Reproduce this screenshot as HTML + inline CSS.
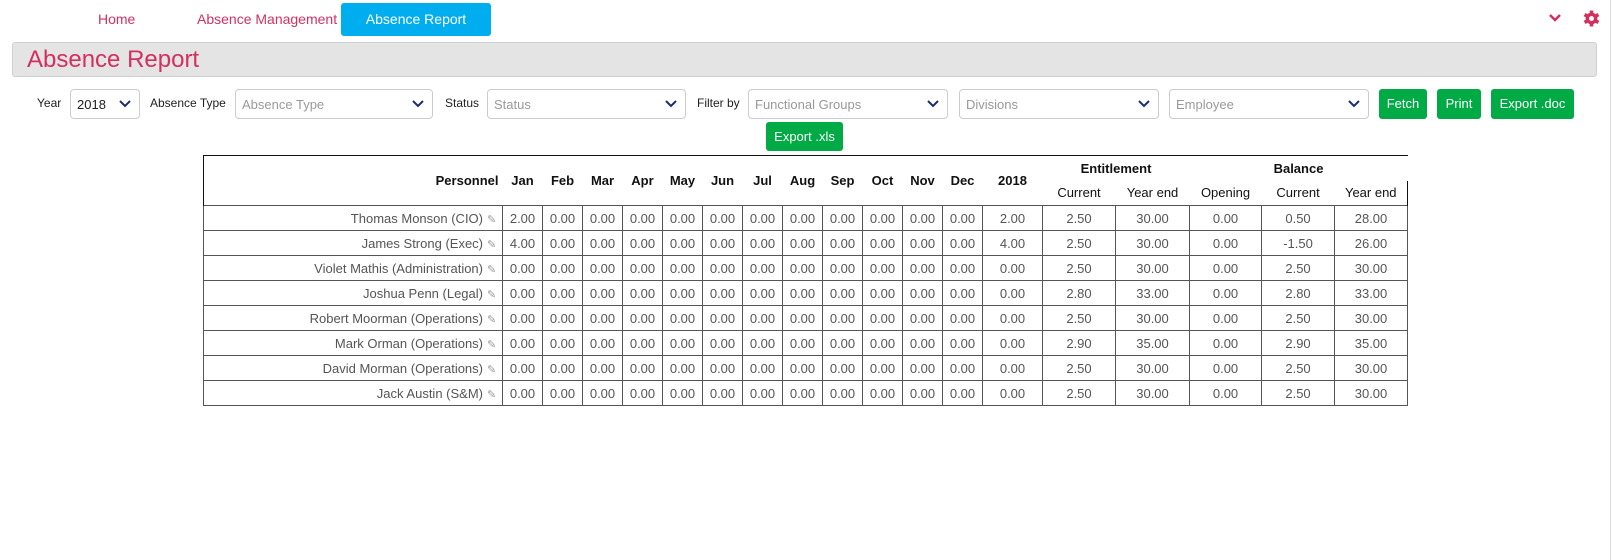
<!DOCTYPE html>
<html><head><meta charset="utf-8"><style>
*{box-sizing:border-box;margin:0;padding:0}
body{width:1613px;height:560px;background:#fff;font-family:"Liberation Sans",sans-serif;position:relative;overflow:hidden;font-size:13px}
.a{position:absolute}
.nav{color:#d3305f;font-size:14px;top:11px}
.tab{left:341px;top:3px;width:150px;height:33px;background:#00aeef;color:#fff;border-radius:3px;font-size:14px;text-align:center;line-height:33px}
.bar{left:12px;top:42px;width:1585px;height:35px;background:#e4e4e4;border:1px solid #d0d0d0;border-radius:3px}
.bar span{position:absolute;left:14px;top:3px;font-size:24px;color:#d3305f}
.lbl{top:96px;font-size:12px;color:#222}
.sel{top:89px;height:30px;border:1px solid #ccc;border-radius:4px;color:#999;font-size:13px;padding:7px 0 0 6px}
.sel svg{position:absolute;right:8px;top:10px}
.btn{top:89px;height:30px;background:#00aa44;color:#fff;border-radius:3px;font-size:13px;text-align:center;line-height:30px}
table{position:absolute;left:203px;top:155px;border-collapse:collapse;table-layout:fixed;width:1204px}
td{border:1px solid #555;height:25px;text-align:center;color:#555;font-size:13px;padding:0}
td.n{text-align:right;padding-right:6px}
th{font-size:13px;color:#111;padding:0}
.pen{display:inline-block;width:9px;color:#999;font-size:11px;margin-left:4px}
</style></head><body>
<div class="a nav" style="left:98px">Home</div>
<div class="a nav" style="left:197px">Absence Management</div>
<div class="a tab">Absence Report</div>
<svg class="a" style="left:1548px;top:13px" width="14" height="10" viewBox="0 0 14 10"><path d="M2 2l5 5 5-5" stroke="#d3305f" stroke-width="2.5" fill="none"/></svg>
<svg class="a" style="left:1583px;top:10px" width="17" height="17" viewBox="0 0 16 16"><g fill="#d3305f"><circle cx="8" cy="8" r="5.5"/><rect x="6.3" y="0.5" width="3.4" height="15"/><rect x="6.3" y="0.5" width="3.4" height="15" transform="rotate(60 8 8)"/><rect x="6.3" y="0.5" width="3.4" height="15" transform="rotate(120 8 8)"/></g><circle cx="8" cy="8" r="2.3" fill="#fff"/></svg>
<div class="a" style="left:1610px;top:0;width:1px;height:560px;background:#ddd"></div>
<div class="a bar"><span>Absence Report</span></div>

<div class="a lbl" style="left:37px">Year</div>
<div class="a sel" style="left:70px;width:70px;color:#222">2018<svg width="12" height="8"><path d="M1 1l5 5 5-5" stroke="#1a2e6e" stroke-width="2" fill="none"/></svg></div>
<div class="a lbl" style="left:150px">Absence Type</div>
<div class="a sel" style="left:235px;width:198px">Absence Type<svg width="12" height="8"><path d="M1 1l5 5 5-5" stroke="#1a2e6e" stroke-width="2" fill="none"/></svg></div>
<div class="a lbl" style="left:445px">Status</div>
<div class="a sel" style="left:487px;width:199px">Status<svg width="12" height="8"><path d="M1 1l5 5 5-5" stroke="#1a2e6e" stroke-width="2" fill="none"/></svg></div>
<div class="a lbl" style="left:697px">Filter by</div>
<div class="a sel" style="left:748px;width:200px">Functional Groups<svg width="12" height="8"><path d="M1 1l5 5 5-5" stroke="#1a2e6e" stroke-width="2" fill="none"/></svg></div>
<div class="a sel" style="left:959px;width:200px">Divisions<svg width="12" height="8"><path d="M1 1l5 5 5-5" stroke="#1a2e6e" stroke-width="2" fill="none"/></svg></div>
<div class="a sel" style="left:1169px;width:200px">Employee<svg width="12" height="8"><path d="M1 1l5 5 5-5" stroke="#1a2e6e" stroke-width="2" fill="none"/></svg></div>
<div class="a btn" style="left:1379px;width:48px">Fetch</div>
<div class="a btn" style="left:1437px;width:44px">Print</div>
<div class="a btn" style="left:1491px;width:83px">Export .doc</div>
<div class="a btn" style="left:766px;top:122px;width:77px;height:29px;line-height:29px">Export .xls</div>

<table>
<colgroup><col style="width:299px"><col span="12" style="width:40px"><col style="width:60px"><col style="width:73px"><col style="width:74px"><col style="width:72px"><col style="width:73px"><col style="width:73px"></colgroup>
<tr style="height:25px;border-top:1px solid #111"><th rowspan="2" style="text-align:right;padding-right:4px;border-left:1px solid #111">Personnel</th><th rowspan="2">Jan</th><th rowspan="2">Feb</th><th rowspan="2">Mar</th><th rowspan="2">Apr</th><th rowspan="2">May</th><th rowspan="2">Jun</th><th rowspan="2">Jul</th><th rowspan="2">Aug</th><th rowspan="2">Sep</th><th rowspan="2">Oct</th><th rowspan="2">Nov</th><th rowspan="2">Dec</th><th rowspan="2">2018</th><th colspan="2">Entitlement</th><th colspan="3">Balance</th></tr>
<tr style="height:25px"><th style="font-weight:normal">Current</th><th style="font-weight:normal">Year end</th><th style="font-weight:normal">Opening</th><th style="font-weight:normal">Current</th><th style="font-weight:normal;border-right:1px solid #111">Year end</th></tr>
<tr><td class="n">Thomas Monson (CIO)<span class="pen">✎</span></td><td>2.00</td><td>0.00</td><td>0.00</td><td>0.00</td><td>0.00</td><td>0.00</td><td>0.00</td><td>0.00</td><td>0.00</td><td>0.00</td><td>0.00</td><td>0.00</td><td>2.00</td><td>2.50</td><td>30.00</td><td>0.00</td><td>0.50</td><td>28.00</td></tr>
<tr><td class="n">James Strong (Exec)<span class="pen">✎</span></td><td>4.00</td><td>0.00</td><td>0.00</td><td>0.00</td><td>0.00</td><td>0.00</td><td>0.00</td><td>0.00</td><td>0.00</td><td>0.00</td><td>0.00</td><td>0.00</td><td>4.00</td><td>2.50</td><td>30.00</td><td>0.00</td><td>-1.50</td><td>26.00</td></tr>
<tr><td class="n">Violet Mathis (Administration)<span class="pen">✎</span></td><td>0.00</td><td>0.00</td><td>0.00</td><td>0.00</td><td>0.00</td><td>0.00</td><td>0.00</td><td>0.00</td><td>0.00</td><td>0.00</td><td>0.00</td><td>0.00</td><td>0.00</td><td>2.50</td><td>30.00</td><td>0.00</td><td>2.50</td><td>30.00</td></tr>
<tr><td class="n">Joshua Penn (Legal)<span class="pen">✎</span></td><td>0.00</td><td>0.00</td><td>0.00</td><td>0.00</td><td>0.00</td><td>0.00</td><td>0.00</td><td>0.00</td><td>0.00</td><td>0.00</td><td>0.00</td><td>0.00</td><td>0.00</td><td>2.80</td><td>33.00</td><td>0.00</td><td>2.80</td><td>33.00</td></tr>
<tr><td class="n">Robert Moorman (Operations)<span class="pen">✎</span></td><td>0.00</td><td>0.00</td><td>0.00</td><td>0.00</td><td>0.00</td><td>0.00</td><td>0.00</td><td>0.00</td><td>0.00</td><td>0.00</td><td>0.00</td><td>0.00</td><td>0.00</td><td>2.50</td><td>30.00</td><td>0.00</td><td>2.50</td><td>30.00</td></tr>
<tr><td class="n">Mark Orman (Operations)<span class="pen">✎</span></td><td>0.00</td><td>0.00</td><td>0.00</td><td>0.00</td><td>0.00</td><td>0.00</td><td>0.00</td><td>0.00</td><td>0.00</td><td>0.00</td><td>0.00</td><td>0.00</td><td>0.00</td><td>2.90</td><td>35.00</td><td>0.00</td><td>2.90</td><td>35.00</td></tr>
<tr><td class="n">David Morman (Operations)<span class="pen">✎</span></td><td>0.00</td><td>0.00</td><td>0.00</td><td>0.00</td><td>0.00</td><td>0.00</td><td>0.00</td><td>0.00</td><td>0.00</td><td>0.00</td><td>0.00</td><td>0.00</td><td>0.00</td><td>2.50</td><td>30.00</td><td>0.00</td><td>2.50</td><td>30.00</td></tr>
<tr><td class="n">Jack Austin (S&amp;M)<span class="pen">✎</span></td><td>0.00</td><td>0.00</td><td>0.00</td><td>0.00</td><td>0.00</td><td>0.00</td><td>0.00</td><td>0.00</td><td>0.00</td><td>0.00</td><td>0.00</td><td>0.00</td><td>0.00</td><td>2.50</td><td>30.00</td><td>0.00</td><td>2.50</td><td>30.00</td></tr>
</table>
</body></html>
